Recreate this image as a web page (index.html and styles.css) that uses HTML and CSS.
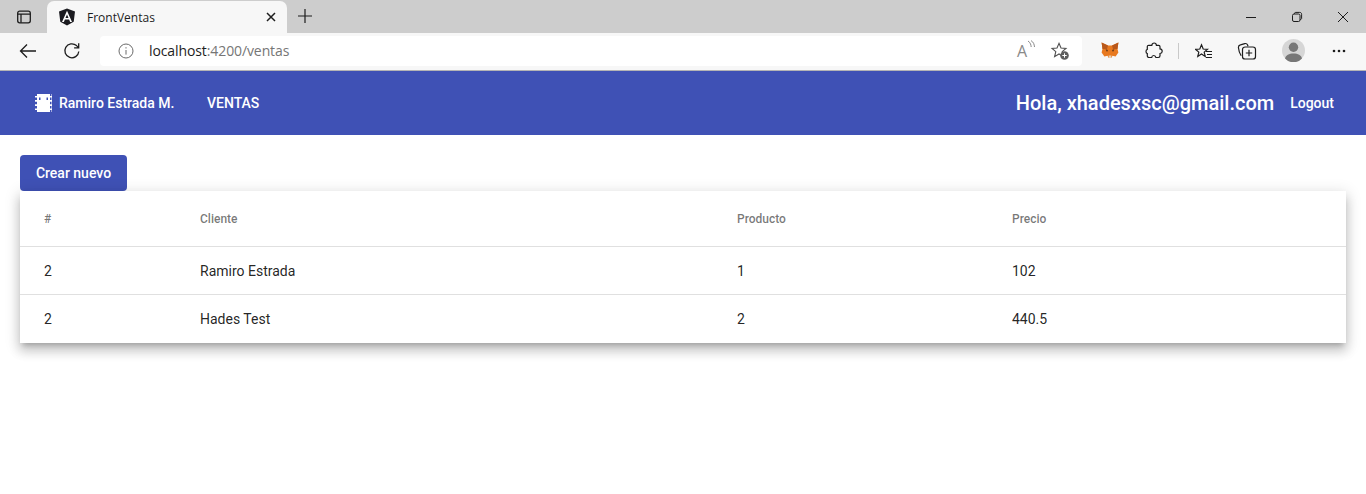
FILE: index.html
```html
<!DOCTYPE html>
<html lang="es">
<head>
<meta charset="utf-8">
<title>FrontVentas</title>
<link rel="stylesheet" href="styles.css">
</head>
<body>
<div class="tabstrip">
  <div class="tabstrip-side">
    <svg class="ic" width="16" height="16" viewBox="0 0 16 16" fill="none" stroke="#1d1d1d" stroke-width="1.3"><rect x="1.7" y="2.2" width="12.6" height="11.6" rx="2"/><path d="M1.7 5.2h12.6M5 5.2v8.6"/></svg>
  </div>
  <div class="tab">
    <svg class="tab-logo" width="18" height="18" viewBox="0 0 18 18"><path d="M9 .5 1 3.4l1.3 10.4L9 17.5l6.7-3.7L17 3.4z" fill="#1b1b20"/><path d="M9 2.8 4 14h1.9l1-2.5h4.2l1 2.5H14zm1.5 7.2h-3L9 6.4z" fill="#fff"/></svg>
    <span class="tab-title">FrontVentas</span>
    <svg class="tab-close" width="10" height="10" viewBox="0 0 10 10" stroke="#1d1d1d" stroke-width="1.5"><path d="M1 1l8 8M9 1l-8 8"/></svg>
  </div>
  <svg class="tab-new" width="16" height="16" viewBox="0 0 16 16" stroke="#1d1d1d" stroke-width="1.2"><path d="M8 1v14M1 8h14"/></svg>
  <div class="window-controls">
    <svg width="12" height="12" viewBox="0 0 12 12" stroke="#1d1d1d" stroke-width="1"><path d="M1 6.5h10"/></svg>
    <svg width="12" height="12" viewBox="0 0 12 12" fill="none" stroke="#1d1d1d" stroke-width="1"><rect x="1.5" y="3" width="7.5" height="7.5" rx="1.5"/><path d="M3.5 3V2.6c0-.8.5-1.2 1.2-1.2h4c1.2 0 1.9.7 1.9 1.9v4c0 .7-.4 1.2-1.6 1.2"/></svg>
    <svg width="12" height="12" viewBox="0 0 12 12" stroke="#1d1d1d" stroke-width="1"><path d="M1 1l10 10M11 1L1 11"/></svg>
  </div>
</div>
<div class="addressbar">
  <svg class="nav-back" width="18" height="16" viewBox="0 0 18 16" fill="none" stroke="#1d1d1d" stroke-width="1.3"><path d="M17 8H1.5M8 1.5 1.5 8 8 14.5"/></svg>
  <svg class="nav-reload" width="18" height="18" viewBox="0 0 18 18" fill="none" stroke="#1d1d1d" stroke-width="1.3"><path d="M15.8 9.5A7 7 0 1 1 13.5 3.6L15.5 5.6M15.7 1.2v4.6h-4.6"/></svg>
  <div class="omnibox">
    <svg class="omni-info" width="16" height="16" viewBox="0 0 16 16" fill="none" stroke="#6b6b6b" stroke-width="1"><circle cx="8" cy="8" r="7"/><path d="M8 7v4.6M8 4.2v1.3"/></svg>
    <span class="url"><span class="url-host">localhost</span>:4200/ventas</span>
    <span class="read-aloud">A<svg width="9" height="12" viewBox="0 0 9 12" fill="none" stroke="#8a8a8a" stroke-width="1"><path d="M1 1c2.5 1.500 3 4 3.200 6M4 .6C6.500 2 7.300 4.500 7.500 7"/></svg></span>
    <svg class="omni-fav" width="20" height="20" viewBox="0 0 20 20"><path d="M9 2.300 11 7l5 .4-3.800 3.300 1.200 4.900L9 13l-4.400 2.600 1.200-4.900L2 7.400 7 7z" fill="none" stroke="#4f4f4f" stroke-width="1.100"/><circle cx="14.500" cy="14.500" r="4.300" fill="#5e5e5e"/><path d="M14.500 12.300v4.400M12.300 14.500h4.400" stroke="#fff" stroke-width="1"/></svg>
  </div>
  <div class="ext">
    <svg width="18" height="17" viewBox="0 0 18 17"><path d="M.6.5 7 3.500h4L17.400.5l-.9 6.500.9 3.500-2.800 4-3.100-.7-1.300 2.200H7.800l-1.300-2.200-3.100.7-2.800-4L1.500 7z" fill="#e8791f"/><path d="M.6.500 7 3.500 6 7 1.500 7zM17.400.500 11 3.500 12 7l4.500 0z" fill="#b9581a"/><path d="M7 8 4.600 7.200 6 10zM11 8l2.400-.8L12 10z" fill="#5b3418"/><path d="M7.500 13.500h3l-.5 2.500H8z" fill="#e9cfb2"/></svg>
    <svg width="18" height="18" viewBox="0 0 18 18" fill="none" stroke="#1d1d1d" stroke-width="1.200"><path d="M6.800 3.300C7 1.800 8 1 9.200 1s2.100 1 2.200 2.300h2.200c.8 0 1.400.6 1.400 1.400v2.200c1.400.2 2.200 1.100 2.200 2.300s-.9 2.100-2.200 2.300v2.300c0 1-.7 1.700-1.700 1.700h-2.400c-.2-1.200-1-2-2.100-2s-2 .8-2.100 2H4c-1 0-1.700-.7-1.700-1.700v-2.300C1.800 11.500 1 10.700 1 9.500S1.600 7.600 2.300 7.400V4.700c0-.8.600-1.400 1.400-1.400z"/></svg>
    <span class="sep"></span>
    <svg width="18" height="18" viewBox="0 0 18 18" fill="none" stroke="#1d1d1d" stroke-width="1.200"><path d="M6.500 1.800 8.200 6l4.300.3-3.300 2.800 1 4.300-3.700-2.400-3.700 2.400 1-4.300L.5 6.300 4.800 6zM11 8.500h6M12 11.500h5M11 14.500h6" transform="translate(0 1)"/></svg>
    <svg width="20" height="18" viewBox="0 0 20 18" fill="none" stroke="#1d1d1d" stroke-width="1.200"><path d="M4.200 13.800C2.500 11 1.600 8 1.400 5.500c0-1.400.8-2.300 2-2.600l4.400-1.300c1.300-.3 2.300.2 2.800 1.400l.4 1.200"/><rect x="5.500" y="5" width="13" height="12" rx="2.600" fill="#f7f7f7"/><path d="M12 7.800v6.400M8.800 11h6.400"/></svg>
    <svg class="avatar" width="23" height="23" viewBox="0 0 23 23"><circle cx="11.500" cy="11.500" r="11.500" fill="#d6d6d6"/><circle cx="11.500" cy="8.300" r="4.700" fill="#777"/><path d="M3 19.500c.8-3.200 4-5 8.500-5s7.700 1.800 8.500 5a11.500 11.500 0 0 1-17 0z" fill="#777"/></svg>
    <svg class="more" width="14" height="4" viewBox="0 0 14 4" fill="#1d1d1d"><circle cx="2" cy="2" r="1.300"/><circle cx="7" cy="2" r="1.300"/><circle cx="12" cy="2" r="1.300"/></svg>
  </div>
</div>
<header class="appbar">
  <div class="brand">
    <svg width="18" height="18" viewBox="0 0 18 18"><path d="M2 0h13v2h1.500V0h.5v18h-.5v-2H15v2H2v-2H0v2V0h0v2h2zM0 3.500v2.500h2V3.500zm0 4.200v2.600h2V7.700zm0 4.300v2.500h2V12zm4-8.500v2.500h1.500V3.500zm7.500 0v2.500H13V3.500zM15 3.500v2.500h1.500V3.500zm0 4.200v2.600h1.500V7.700zm0 4.300v2.500h1.500V12z" fill="#fff" fill-rule="evenodd"/></svg>
    <span>Ramiro Estrada M.</span>
  </div>
  <a class="nav-link">VENTAS</a>
  <span class="greeting">Hola, xhadesxsc@gmail.com</span>
  <a class="logout">Logout</a>
</header>
<main class="content">
  <button class="primary">Crear nuevo</button>
  <div class="table">
    <div class="row head"><div>#</div><div>Cliente</div><div>Producto</div><div>Precio</div></div>
    <div class="row"><div>2</div><div>Ramiro Estrada</div><div>1</div><div>102</div></div>
    <div class="row last"><div>2</div><div>Hades Test</div><div>2</div><div>440.5</div></div>
  </div>
</main>
</body>
</html>
```
FILE: styles.css
```css
* { box-sizing: border-box; }
html, body { margin: 0; padding: 0; }
body { background: #fff; font-family: Roboto, "Liberation Sans", sans-serif; overflow: hidden; height: 494px; }
svg { display: block; flex: none; }

.tabstrip { height: 33px; background: #cdcdcd; display: flex; align-items: flex-end; }
.tabstrip-side { width: 47px; height: 33px; display: flex; align-items: center; padding-left: 16px; }
.tab { width: 240px; height: 32px; background: #f7f7f7; border-radius: 7px 7px 0 0; display: flex; align-items: center; padding: 0 11px; }
.tab-logo { margin-right: 11px; }
.tab-title { font: 12px "Open Sans", "Liberation Sans", sans-serif; color: #1d1d1d; flex: 1; }
.tab-new { margin: 0 0 9px 10px; }
.window-controls { margin-left: auto; height: 33px; display: flex; align-items: center; gap: 34px; padding-right: 17px; }

.addressbar { height: 38px; background: #f7f7f7; border-bottom: 1px solid #b5b5b5; display: flex; align-items: center; padding: 0 0 2px 19px; }
.nav-reload { margin-left: 26px; }
.omnibox { width: 982px; height: 30px; margin-left: 19px; background: #fff; border-radius: 4px; display: flex; align-items: center; padding-left: 18px; }
.url { font: 14px "Open Sans", "Liberation Sans", sans-serif; color: #767676; margin-left: 15px; flex: 1; letter-spacing: -.1px; }
.url-host { color: #1d1d1d; }
.read-aloud { font: 16px "Open Sans", "Liberation Sans", sans-serif; color: #8a8a8a; display: flex; align-items: flex-start; width: 25px; margin-right: 8px; }
.omni-fav { margin-right: 12px; }
.ext { flex: 1; display: flex; align-items: center; padding-left: 19px; }
.ext .sep { width: 1px; height: 16px; background: #c9c9c9; margin: 0 16px 0 15px; }
.ext svg:nth-child(1) { margin-right: 26px; }
.ext svg:nth-child(4) { margin-right: 24px; }
.avatar { margin-left: 25px; }
.more { margin-left: 27px; }

.appbar { height: 64px; background: #3f51b5; color: #fff; display: flex; align-items: center; padding: 0 32px 0 35px; }
.brand { display: flex; align-items: center; gap: 6px; font-size: 14px; font-weight: 500; width: 172px; }
.nav-link { font-size: 14px; font-weight: 500; }
.greeting { margin-left: auto; font-size: 20px; font-weight: 500; }
.logout { font-size: 14px; font-weight: 500; margin-left: 16px; }

.content { padding: 20px 20px 0; }
.primary { display: block; width: 107px; height: 36px; background: #3f51b5; color: #fff; border: 0; border-radius: 4px; padding: 0; font: 500 14px Roboto, sans-serif; }
.table { background: #fff; box-shadow: 0 5px 5px -3px rgba(0,0,0,.2), 0 8px 10px 1px rgba(0,0,0,.14), 0 3px 14px 2px rgba(0,0,0,.12); }
.row { display: grid; grid-template-columns: 156px 537px 275px 1fr; height: 48px; padding-left: 24px; align-items: center; font-size: 14px; color: rgba(0,0,0,.87); border-bottom: 1px solid #e0e0e0; }
.row.head { height: 56px; font-size: 12px; font-weight: 500; color: rgba(0,0,0,.54); }
.row.last { border-bottom: 0; }
```
